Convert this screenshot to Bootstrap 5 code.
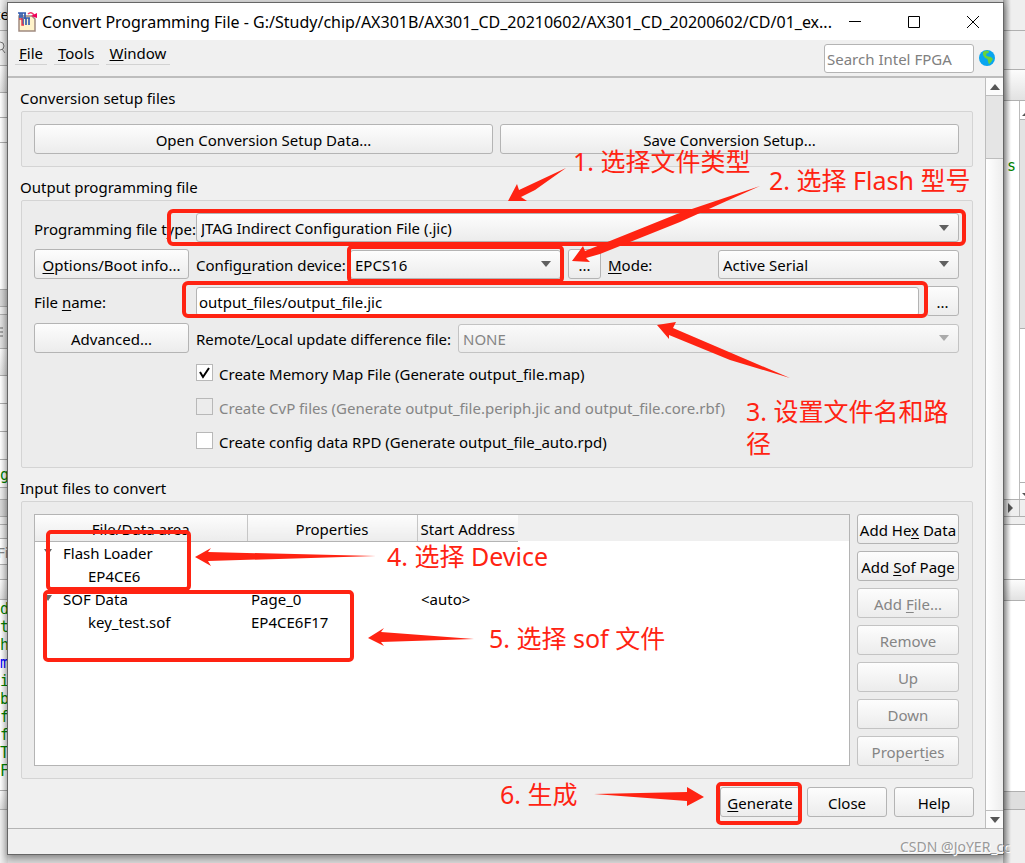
<!DOCTYPE html>
<html lang="en">
<head>
<meta charset="utf-8">
<meta name="viewport" content="width=device-width, initial-scale=1">
<title>Convert Programming File</title>
<link href="https://cdn.jsdelivr.net/npm/bootstrap@5.3.0/dist/css/bootstrap.min.css" rel="stylesheet">
<style>
:root{--edge:#b4b4b4;--red:#ff2312;--face:linear-gradient(#fdfdfd,#ececec)}
body{font-family:"Noto Sans","Noto Sans CJK SC",sans-serif;font-size:15px;line-height:20px;color:#000;background:#d9d9d9;min-height:100vh;overflow:hidden}
u{text-underline-offset:2px}
.desk{min-height:100vh;position:relative;padding-top:2px}
.side-strip{position:absolute;top:0;bottom:0;overflow:hidden;background:#efefef}
.side-left{left:0;width:8px}
.side-right{right:0;width:22px}
.seg{border-bottom:1px solid #b0b0b0;overflow:hidden;flex:none;position:relative}
.shade{background:linear-gradient(#fcfcfc,#e2e2e2)}
.code-strip{font:15px/18px "DejaVu Sans Mono",monospace;color:#008200;white-space:nowrap}
.side-left::after,.side-right::after{content:"";position:absolute;inset:0;width:8px}
.side-left::after{background:linear-gradient(to right,transparent,#0002);left:0}
.side-right::after{background:linear-gradient(to left,transparent,#0005)}
.app-window{margin:0 21px 8px 7px;border:1px solid #666;background:#f0f0f0;box-shadow:0 3px 7px #0006;position:relative;min-height:calc(100vh - 10px)}
.title-bar{height:37px;background:#fff;padding:0 8px 0 9px;font-size:16px}
.title-bar h1{font-size:16px;line-height:22px;font-weight:400;margin:0 0 0 3px}
.title-bar button{border:0;background:none;padding:0;width:14px;height:14px;display:flex}
.win-btns{gap:45px;padding-right:15px}
.menu-bar{height:38px;border-bottom:2px solid #bdbdbd;padding:0 7px}
.menu-bar a{color:#000;text-decoration:none;padding:0 4px;height:22px;border-bottom:1px solid #d2d2d2;margin:3px 7px 0 0;line-height:20px}
.menu-bar a::first-letter{text-decoration:underline}
.field{border:1px solid var(--edge);border-radius:3px;background:#fff;height:29px;padding:2px 2px 0;font:inherit;color:#000;min-width:0}
.menu-bar .field{width:150px}
.field::placeholder{color:#808080;opacity:1}
.tool-btn{border:1px solid var(--edge);border-radius:3px;background:var(--face);height:30px;padding:2px 0 0;font:inherit;line-height:22px;color:#000;white-space:nowrap}
.tool-btn:disabled{color:#858585;border-color:#c3c3c3}
.pick{height:29px;border:1px solid var(--edge);border-radius:3px;padding:1px 28px 0 4px;font:inherit;color:#000;min-width:0;appearance:none;background:url("data:image/svg+xml,%3Csvg xmlns='http://www.w3.org/2000/svg' width='10' height='6'%3E%3Cpath d='M0 0h10L5 6z' fill='%23606060'/%3E%3C/svg%3E") no-repeat right 9px center,var(--face)}
.pick:disabled{color:#858585;opacity:1;border-color:#c3c3c3;background:url("data:image/svg+xml,%3Csvg xmlns='http://www.w3.org/2000/svg' width='10' height='6'%3E%3Cpath d='M0 0h10L5 6z' fill='%23aaa'/%3E%3C/svg%3E") no-repeat right 9px center,linear-gradient(#fafafa,#ececec)}
.pane{padding:8px 12px 10px 12px;min-width:0}
.group-box{border:1px solid #d4d4d4;border-radius:2px;background:#ececec;padding:12px 13px 12px 12px;margin-left:1px}
.group-title{height:25px;padding-top:2px}
.gap7{gap:7px}
.form-grid{display:grid;grid-template-columns:155px 1fr;gap:7px;align-items:center}
.form-grid .line{display:flex;gap:7px;align-items:center;min-width:0}
.form-grid label{padding-top:2px;white-space:nowrap;flex:none}
.w-device{width:147px}
.w-mode{width:103px}
.w-modepick{width:241px}
.w-diff{width:255px}
.dots{width:33px;flex:none}
.tick{appearance:none;width:17px;height:17px;border:1px solid #b8b8b8;background:#fff;margin:0 6px 0 0;flex:none}
.tick:checked{background:#fff url("data:image/svg+xml,%3Csvg xmlns='http://www.w3.org/2000/svg' width='15' height='15'%3E%3Cpath d='M3 7l3 5 6-9' fill='none' stroke='%23000' stroke-width='2'/%3E%3C/svg%3E")}
.tick:disabled{background:#ececec}
.off-row{color:#858585}
.checks{gap:11px;padding-top:1px;padding-bottom:3px}
.checks>div{height:23px}
.tree-view{border:1px solid var(--edge);background:#fff;height:252px}
.tree-view table{width:100%;table-layout:fixed;border-collapse:collapse}
.col-area{width:212px}
.col-props{width:170px}
.col-start{width:101px}
.tree-view thead{background:#efefef}
.tree-view th{height:26px;font-weight:400;text-align:center;padding:3px 0 0;border-right:1px solid #c6c6c6;border-bottom:1px solid #b4b4b4;background:var(--face);white-space:nowrap}
.tree-view th:nth-child(3){border-right:0}
.tree-view th:last-child{border:0;background:#efefef}
.tree-view td{height:23px;padding:1px 0 0 4px;white-space:nowrap;line-height:20px}
.tree-view td.branch{padding-left:9px}
.tree-view td.leaf{padding-left:53px}
.caret-mark{display:inline-block;border:4px solid transparent;border-top:6px solid #666;border-bottom:0;margin-right:11px;vertical-align:4px}
.side-btns{width:102px}
.foot-btns .tool-btn{width:80px}
.foot-btns{margin-right:-1px}
.scroll-col{width:18px;flex:none;border-left:1px solid #bdbdbd;background:#fbfbfb}
.scroll-end{height:17px;display:flex;align-items:center;justify-content:center}
.scroll-track{height:64px;background:#e5e5e5;border:1px solid #bdbdbd;border-width:1px 0}
.scroll-thumb{background:linear-gradient(to right,#fff,#ededed);border-bottom:1px solid #bdbdbd}
.status-line{height:26px;border-top:1px solid #b4b4b4}
.notes{position:absolute;left:0;top:0;width:1025px;height:863px;pointer-events:none}
.note{position:absolute;color:var(--red);font:25px/32px "Noto Sans","Noto Sans CJK SC",sans-serif;white-space:nowrap}
.watermark{position:absolute;right:15px;bottom:6px;font:14px/20px "Noto Sans",sans-serif;color:#999;text-shadow:1px 1px #fff}
</style>
</head>
<body>
<div class="desk">
  <aside class="side-strip side-left d-flex flex-column" aria-hidden="true">
    <div class="seg" style="height:31px"><span style="margin-left:-5px;line-height:28px">te</span></div>
    <div class="seg" style="height:35px"><svg width="8" height="34"><circle cx="0" cy="15" r="4" fill="none" stroke="#777"/><path d="M2 18l3 4" stroke="#777"/></svg></div>
    <div class="seg shade" style="height:27px"></div>
    <div class="seg bg-white" style="height:25px"></div>
    <div class="seg bg-white" style="height:25px"></div>
    <div class="seg bg-white" style="height:147px"></div>
    <div class="seg" style="height:17px;background:#d8d8d8"></div>
    <div class="seg" style="height:8px"></div>
    <div class="seg" style="height:34px;background:#e2e2e2"><svg width="8" height="34"><path d="M0 13h3M0 17h3M0 21h3" stroke="#666"/></svg></div>
    <div class="seg shade" style="height:27px"></div>
    <div class="seg bg-white" style="height:28px"></div>
    <div class="seg bg-white" style="height:28px"></div>
    <div class="seg bg-white" style="height:28px"></div>
    <div class="seg bg-white code-strip" style="height:28px;line-height:30px">g</div>
    <div class="seg" style="height:12px"></div>
    <div class="seg" style="height:17px;background:#d8d8d8"></div>
    <div class="seg" style="height:8px"></div>
    <div class="seg" style="height:14px"></div>
    <div class="seg bg-white" style="height:26px;line-height:26px;color:#888"><span style="margin-left:-3px">Fi</span></div>
    <div class="seg" style="height:15px"></div>
    <div class="seg shade" style="height:20px"></div>
    <div class="seg bg-white code-strip" style="height:191px">d<br>t<br>h<br><span style="color:#00f">m</span><br>i<br>b<br>f<br>f<br>T<br>F</div>
    <div class="seg shade" style="height:19px"></div>
  </aside>
  <aside class="side-strip side-right d-flex flex-column" aria-hidden="true">
    <div class="seg" style="height:31px"></div>
    <div class="seg" style="height:39px"></div>
    <div class="seg shade" style="height:31px"></div>
    <div class="d-flex seg bg-white" style="height:399px">
      <div class="code-strip ps-1 flex-grow-1" style="line-height:130px">s</div>
      <div style="width:6px;border-left:1px solid #bbb">
        <div class="seg" style="height:19px"><svg width="6" height="18"><path d="M2 12h8L6 8z" fill="#555"/></svg></div>
        <div class="seg" style="height:209px;background:#e3e3e3"></div>
        <div class="seg bg-white" style="height:154px"></div>
        <svg width="6" height="14"><path d="M2 5h8L6 9z" fill="#555"/></svg>
      </div>
    </div>
    <div class="seg" style="height:17px"><svg class="d-block" width="22" height="16"><path d="M5 3v10l5-5z" fill="#555"/><path d="M16.500 0v16" stroke="#bbb"/></svg></div>
    <div class="seg" style="height:8px"></div>
    <div class="seg bg-white" style="height:55px"></div>
    <div class="seg shade" style="height:21px"></div>
    <div class="seg bg-white" style="height:191px"></div>
    <div class="seg" style="height:18px;background:#dedede"></div>
  </aside>

  <main class="app-window d-flex flex-column">
    <header class="title-bar d-flex align-items-center">
      <svg width="22" height="22" viewBox="0 0 22 22" aria-hidden="true"><path d="M3 5h12l3 3v12H2V5z" fill="#fff3c9" stroke="#a08a80" stroke-width="1.500"/><path d="M1 2h2v5M5 2v6M8 2v6M1 2h8M6 8v6M9 7v7M12 7v7M6 7h7" stroke="#345eb0" stroke-width="1.700" fill="none"/><path d="M2 8h3v6h2" stroke="#e7364b" stroke-width="1.400" fill="none"/><path d="M11 3q3-3 6 1" stroke="#ef3569" fill="none" stroke-width="1.500"/><path d="M14 5l6-3v5z" fill="#f00059"/></svg>
      <h1 class="flex-grow-1 text-truncate">Convert Programming File - G:/Study/chip/AX301B/AX301_CD_20210602/AX301_CD_20200602/CD/01_ex...</h1>
      <div class="win-btns d-flex align-items-center">
        <button type="button" aria-label="Minimize"><svg width="14" height="14"><path d="M1 6.500h12" stroke="#000"/></svg></button>
        <button type="button" aria-label="Maximize"><svg width="14" height="14"><path d="M1.500 1.500h11v11h-11z" stroke="#000" fill="none"/></svg></button>
        <button type="button" aria-label="Close window"><svg width="14" height="14"><path d="M1 1l12 12M13 1L1 13" stroke="#000"/></svg></button>
      </div>
    </header>
    <nav class="menu-bar d-flex align-items-center">
      <div class="d-flex flex-grow-1 align-self-start"><a href="#">File</a><a href="#">Tools</a><a href="#">Window</a></div>
      <input class="field" type="search" placeholder="Search Intel FPGA" aria-label="Search Intel FPGA">
      <svg class="ms-1" width="18" height="18" viewBox="0 0 18 18" aria-hidden="true"><circle cx="9" cy="9" r="8" fill="#08a5ef"/><path d="M5 3l3-1.500 3 .5-.5 2-2 .5-.5 2 2 1 3 .5 2 2-1.500 2.500-2.500 3-1-3-.5-2.500-2.500-1-2-3z" fill="#68d23b"/></svg>
    </nav>

    <div class="d-flex flex-grow-1">
      <form class="pane flex-grow-1" onsubmit="return false">
        <div class="group-title">Conversion setup files</div>
        <section class="group-box d-flex gap7">
          <button class="tool-btn w-50" type="button">Open Conversion Setup Data...</button>
          <button class="tool-btn w-50" type="button">Save Conversion Setup...</button>
        </section>

        <div class="group-title mt-2">Output programming file</div>
        <section class="group-box form-grid">
          <label for="ftype">Programming file type:</label>
          <select id="ftype" class="pick"><option>JTAG Indirect Configuration File (.jic)</option></select>
          <button class="tool-btn" type="button"><u>O</u>ptions/Boot info...</button>
          <div class="line">
            <label for="dev" class="w-device">Config<u>u</u>ration device:</label>
            <select id="dev" class="pick flex-grow-1"><option>EPCS16</option></select>
            <button class="tool-btn dots" type="button">...</button>
            <label for="mode" class="w-mode"><u>M</u>ode:</label>
            <select id="mode" class="pick w-modepick"><option>Active Serial</option></select>
          </div>
          <label for="fname">File <u>n</u>ame:</label>
          <div class="line"><input id="fname" class="field flex-grow-1" value="output_files/output_file.jic"><button class="tool-btn dots" type="button">...</button></div>
          <button class="tool-btn" type="button">Advanced...</button>
          <div class="line"><label for="diff" class="w-diff">Remote/<u>L</u>ocal update difference file:</label><select id="diff" class="pick flex-grow-1" disabled><option>NONE</option></select></div>
          <span></span>
          <div class="checks d-flex flex-column">
            <div class="d-flex align-items-center"><input class="tick" type="checkbox" id="c1" checked><label for="c1">Create Memory Map File (Generate output_file.map)</label></div>
            <div class="d-flex align-items-center off-row"><input class="tick" type="checkbox" id="c2" disabled><label for="c2">Create CvP files (Generate output_file.periph.jic and output_file.core.rbf)</label></div>
            <div class="d-flex align-items-center"><input class="tick" type="checkbox" id="c3"><label for="c3">Create config data RPD (Generate output_file_auto.rpd)</label></div>
          </div>
        </section>

        <div class="group-title mt-2">Input files to convert</div>
        <section class="group-box d-flex gap7">
          <div class="tree-view flex-grow-1">
            <table>
              <colgroup><col class="col-area"><col class="col-props"><col class="col-start"><col></colgroup>
              <thead><tr><th>File/Data area</th><th>Properties</th><th>Start Address</th><th></th></tr></thead>
              <tbody>
                <tr><td class="branch"><i class="caret-mark"></i>Flash Loader</td><td></td><td></td><td></td></tr>
                <tr><td class="leaf">EP4CE6</td><td></td><td></td><td></td></tr>
                <tr><td class="branch"><i class="caret-mark"></i>SOF Data</td><td>Page_0</td><td>&lt;auto&gt;</td><td></td></tr>
                <tr><td class="leaf">key_test.sof</td><td>EP4CE6F17</td><td></td><td></td></tr>
              </tbody>
            </table>
          </div>
          <div class="side-btns d-flex flex-column gap7 flex-shrink-0">
            <button class="tool-btn" type="button">Add He<u>x</u> Data</button>
            <button class="tool-btn" type="button">Add <u>S</u>of Page</button>
            <button class="tool-btn" type="button" disabled>Add <u>F</u>ile...</button>
            <button class="tool-btn" type="button" disabled>Remove</button>
            <button class="tool-btn" type="button" disabled>Up</button>
            <button class="tool-btn" type="button" disabled>Down</button>
            <button class="tool-btn" type="button" disabled>Propert<u>i</u>es</button>
          </div>
        </section>
        <div class="foot-btns d-flex justify-content-end gap7 pt-2">
          <button class="tool-btn" type="submit"><u>G</u>enerate</button>
          <button class="tool-btn" type="button">Close</button>
          <button class="tool-btn" type="button">Help</button>
        </div>
      </form>
      <div class="scroll-col d-flex flex-column" aria-hidden="true">
        <div class="scroll-end"><svg width="10" height="6"><path d="M0 6h10L5 0z" fill="#555"/></svg></div>
        <div class="scroll-track"></div>
        <div class="scroll-thumb flex-grow-1"></div>
        <div class="scroll-end"><svg width="10" height="6"><path d="M0 0h10L5 6z" fill="#555"/></svg></div>
      </div>
    </div>
    <footer class="status-line"></footer>
  </main>

  <div class="notes">
    <svg width="1025" height="863" aria-hidden="true">
      <g fill="none" stroke="#ff2312" stroke-width="4">
        <rect x="169" y="211" width="795" height="33" rx="4"/>
        <rect x="349" y="247" width="213" height="34" rx="3"/>
        <rect x="184" y="283" width="742" height="33" rx="4"/>
        <rect x="48" y="532" width="141" height="57" rx="3"/>
        <rect x="45" y="592" width="307" height="68" rx="3"/>
        <rect x="718" y="784" width="82" height="39" rx="3"/>
      </g>
      <g fill="#ff2312">
        <path d="M566 168L535 190 521 197 527 201 508 201 517 184 519 190z"/>
        <path d="M760 186L680 222 600 254 586 258 590 262 572 261 583 246 585 251 677 214z"/>
        <path d="M790 378L730 360 669 335 669 339 657 325 676 322 673 328z"/>
        <path d="M376 556L208 552 211 548 195 557 211 566 208 561z"/>
        <path d="M474 639L381 632 384 628 368 638 384 646 381 642z"/>
        <path d="M594 794L687 792 687 787 704 797 687 806 687 801z"/>
      </g>
    </svg>
    <div class="note" style="left:573px;top:145px">1. 选择文件类型</div>
    <div class="note" style="left:769px;top:164px">2. 选择 Flash 型号</div>
    <div class="note" style="left:746px;top:395px">3. 设置文件名和路<br>径</div>
    <div class="note" style="left:387px;top:540px">4. 选择 Device</div>
    <div class="note" style="left:489px;top:622px">5. 选择 sof 文件</div>
    <div class="note" style="left:500px;top:778px">6. 生成</div>
  </div>
  <div class="watermark">CSDN @JoYER_cc</div>
</div>
<script src="https://cdn.jsdelivr.net/npm/bootstrap@5.3.0/dist/js/bootstrap.bundle.min.js"></script>
</body>
</html>
